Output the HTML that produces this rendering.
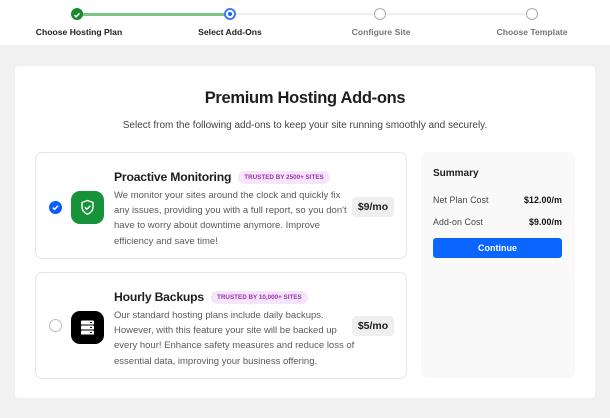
<!DOCTYPE html>
<html><head><meta charset="utf-8"><style>
*{box-sizing:border-box;margin:0;padding:0}
body{width:610px;height:418px;background:#f1f1f1;font-family:"Liberation Sans",sans-serif;position:relative;overflow:hidden;color:#1e1e1e}
.top{position:absolute;left:0;top:0;width:610px;height:45px;background:#fff}
.line{position:absolute;top:13px;height:3px}
.dot{position:absolute;top:8px;width:12px;height:12px;border-radius:50%;}
.lbl{position:absolute;top:27px;font-size:8.6px;font-weight:bold;transform:translateX(-50%);white-space:nowrap}
.card{position:absolute;left:15px;top:66px;width:580px;height:332px;background:#fff;border-radius:3px}
h1{position:absolute;left:0;width:610px;top:89px;text-align:center;font-size:16.5px;font-weight:bold;letter-spacing:-.3px}
.sub{position:absolute;left:0;width:610px;top:120px;text-align:center;font-size:10px;color:#444}
.item{position:absolute;left:35px;width:372px;height:107px;border:1px solid #e6e6e6;border-radius:7px;background:#fff}
.item .t{position:absolute;left:78px;top:17px;font-size:12.2px;font-weight:bold;letter-spacing:-.2px}
.badge{display:inline-block;font-size:6.3px;font-weight:bold;color:#9a2fb8;background:#f6e5fb;border-radius:7px;padding:3px 6px;vertical-align:2px;margin-left:7px;letter-spacing:0}
.item .d{position:absolute;left:78px;top:35px;white-space:nowrap;font-size:9.5px;line-height:15.2px;color:#5a5a5a}
.ic{position:absolute;left:35px;top:38px;width:33px;height:33px;border-radius:9px}
.price{position:absolute;left:316px;width:42px;height:20px;background:#efefef;border-radius:4px;font-size:10.5px;font-weight:bold;text-align:center;line-height:20px}
.sum{position:absolute;left:421px;top:152px;width:154px;height:226px;background:#f9f9f9;border-radius:7px}
.row{position:absolute;left:12px;right:13px;font-size:8.8px;color:#444;letter-spacing:.1px}
.row b{position:absolute;right:0;color:#111}
.btn{position:absolute;left:12px;top:86px;width:129px;height:20px;background:#0a66ff;border-radius:3px;color:#fff;font-size:9px;font-weight:bold;text-align:center;line-height:20px}
</style></head><body>
<div class="top">
<div class="line" style="left:77px;width:153px;background:#7dc383"></div>
<div class="line" style="left:230px;width:302px;background:#efefef;height:2px"></div>
<div class="dot" style="left:71px;background:#17892f"><svg width="12" height="12" viewBox="0 0 12 12"><path d="M3.5 6.2l1.7 1.6 3.3-3.4" stroke="#fff" stroke-width="1.5" fill="none"/></svg></div>
<div class="dot" style="left:224px;border:2px solid #3a7af5;background:#fff"><div style="margin:2px;width:4px;height:4px;border-radius:50%;background:#1d62f0"></div></div>
<div class="dot" style="left:374px;border:1.5px solid #aaa;background:#fff"></div>
<div class="dot" style="left:526px;border:1.5px solid #aaa;background:#fff"></div>
<div class="lbl" style="left:79px">Choose Hosting Plan</div>
<div class="lbl" style="left:230px">Select Add-Ons</div>
<div class="lbl" style="left:381px;color:#777">Configure Site</div>
<div class="lbl" style="left:532px;color:#777">Choose Template</div>
</div>
<div class="card"></div>
<h1>Premium Hosting Add-ons</h1>
<div class="sub">Select from the following add-ons to keep your site running smoothly and securely.</div>

<div class="item" style="top:152px">
<div style="position:absolute;left:13px;top:48px;width:13px;height:13px;border-radius:50%;background:#0a5cff"><svg width="13" height="13" viewBox="0 0 13 13"><path d="M3.8 6.6l1.8 1.7 3.5-3.6" stroke="#fff" stroke-width="1.5" fill="none"/></svg></div>
<div class="ic" style="background:#16933a"><svg width="33" height="33" viewBox="0 0 33 33"><path d="M16.5 9.5l5.5 2v4.5c0 3.5-2.5 6-5.5 7.2-3-1.2-5.5-3.7-5.5-7.2v-4.5z" stroke="#fff" stroke-width="1.4" fill="none" stroke-linejoin="round"/><path d="M13.8 16.3l2 2 3.6-3.6" stroke="#fff" stroke-width="1.4" fill="none"/></svg></div>
<div class="t">Proactive Monitoring<span class="badge">TRUSTED BY 2500+ SITES</span></div>
<div class="d">We monitor your sites around the clock and quickly fix<br>any issues, providing you with a full report, so you don't<br>have to worry about downtime anymore. Improve<br>efficiency and save time!</div>
<div class="price" style="top:44px">$9/mo</div>
</div>

<div class="item" style="top:272px">
<div style="position:absolute;left:13px;top:46px;width:13px;height:13px;border-radius:50%;border:1px solid #bbb;background:#fff"></div>
<div class="ic" style="background:#000"><svg width="33" height="33" viewBox="0 0 33 33"><rect x="10" y="9.5" width="13" height="4" rx=".8" fill="#fff"/><rect x="10" y="14.5" width="13" height="4" rx=".8" fill="#fff"/><rect x="10" y="19.5" width="13" height="4" rx=".8" fill="#fff"/><rect x="19" y="11" width="2" height="1" fill="#000"/><rect x="19" y="16" width="2" height="1" fill="#000"/><rect x="19" y="21" width="2" height="1" fill="#000"/></svg></div>
<div class="t">Hourly Backups<span class="badge">TRUSTED BY 10,000+ SITES</span></div>
<div class="d">Our standard hosting plans include daily backups.<br>However, with this feature your site will be backed up<br>every hour! Enhance safety measures and reduce loss of<br>essential data, improving your business offering.</div>
<div class="price" style="top:43px">$5/mo</div>
</div>

<div class="sum">
<div style="position:absolute;left:12px;top:16px;font-size:10px;font-weight:bold">Summary</div>
<div class="row" style="top:43px">Net Plan Cost<b>$12.00/m</b></div>
<div class="row" style="top:65px">Add-on Cost<b>$9.00/m</b></div>
<div class="btn">Continue</div>
</div>
</body></html>
